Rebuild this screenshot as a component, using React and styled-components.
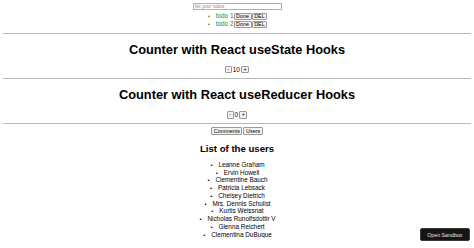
import React, { useState, useReducer } from "react";
import styled, { createGlobalStyle } from "styled-components";

const GlobalStyle = createGlobalStyle`
  html, body { background: #ffffff; }
  body {
    margin: 3.2px;
    font-family: "Liberation Sans", Arial, Helvetica, sans-serif;
    font-size: 6.4px;
    color: #000000;
  }
`;

const Page = styled.div`
  text-align: center;
`;

const TodoInput = styled.input`
  display: block;
  box-sizing: border-box;
  margin: 0 auto;
  width: 89px;
  height: 7px;
  padding: 0 1.2px;
  border: 1px solid #b0b0b0;
  border-radius: 0.5px;
  font-family: "Liberation Sans", Arial, sans-serif;
  font-size: 4.8px;
  background: #ffffff;
  outline: none;
  &::placeholder { color: #8a8a8a; }
`;

const List = styled.ul`
  margin: ${(p) => p.$mt}px 0 ${(p) => p.$mb}px;
  padding: 0 0 0 9px;
  list-style: none;
  color: ${(p) => p.$color || "inherit"};
`;

const Item = styled.li`
  height: ${(p) => p.$h}px;
  line-height: ${(p) => p.$h}px;
  white-space: nowrap;
  &::before {
    content: "•";
    display: inline-block;
    width: 8px;
    text-align: left;
    margin-left: -8px;
    font-size: 6px;
  }
`;

const SmallButton = styled.button`
  box-sizing: border-box;
  height: 7.2px;
  margin: 0;
  padding: 0 1.6px;
  border: 1px solid #9a9a9a;
  border-radius: 1px;
  background: #f2f2f2;
  color: #000000;
  font-family: "Liberation Sans", Arial, sans-serif;
  font-size: 5.4px;
  line-height: 5px;
  vertical-align: middle;
  cursor: pointer;
`;

const Divider = styled.hr`
  height: 0;
  margin: 3.2px 0;
  border: 0;
  border-top: 1px solid #b8b8b8;
`;

const Title = styled.h1`
  margin: 9.1px 0 7.1px;
  font-size: 12.8px;
  line-height: 14.7px;
  font-weight: 700;
`;

const Counter = styled.div`
  display: flex;
  justify-content: center;
  align-items: center;
  gap: 1px;
  height: 10px;
  font-size: 6.4px;
`;

const TabBar = styled.div`
  display: flex;
  justify-content: center;
  align-items: center;
  gap: 1px;
  height: 7.5px;
`;

const Subtitle = styled.h2`
  margin: 8.6px 0 6.4px;
  font-size: 9.6px;
  line-height: 11px;
  font-weight: 700;
`;

const SandboxButton = styled.button`
  position: fixed;
  right: 4.5px;
  bottom: 7px;
  height: 13px;
  padding: 0 6px;
  border: 1px solid #3b3b3b;
  border-radius: 2px;
  background: #151515;
  color: #e6e6e6;
  font-family: "Liberation Sans", Arial, sans-serif;
  font-size: 5.3px;
  cursor: pointer;
`;

const users = [
  "Leanne Graham",
  "Ervin Howell",
  "Clementine Bauch",
  "Patricia Lebsack",
  "Chelsey Dietrich",
  "Mrs. Dennis Schulist",
  "Kurtis Weissnat",
  "Nicholas Runolfsdottir V",
  "Glenna Reichert",
  "Clementina DuBuque",
];

function reducer(state, action) {
  switch (action.type) {
    case "inc":
      return state + 1;
    case "dec":
      return state - 1;
    default:
      return state;
  }
}

export default function App() {
  const [todos, setTodos] = useState([
    { id: 1, text: "todo 1", done: false },
    { id: 2, text: "todo 2", done: false },
  ]);
  const [count, setCount] = useState(10);
  const [value, dispatch] = useReducer(reducer, 0);
  const [tab, setTab] = useState("users");

  return (
    <Page>
      <GlobalStyle />
      <TodoInput placeholder="list your todos" />
      <List $mt={2.2} $mb={4.6} $color="#1a8f1a">
        {todos.map((t) => (
          <Item key={t.id} $h={8}>
            {t.text}
            <SmallButton
              onClick={() =>
                setTodos(todos.map((x) => (x.id === t.id ? { ...x, done: !x.done } : x)))
              }
            >
              Done
            </SmallButton>
            <SmallButton onClick={() => setTodos(todos.filter((x) => x.id !== t.id))}>
              DEL
            </SmallButton>
          </Item>
        ))}
      </List>
      <Divider />
      <Title>Counter with React useState Hooks</Title>
      <Counter>
        <SmallButton onClick={() => setCount(count - 1)}>-</SmallButton>
        <span>{count}</span>
        <SmallButton onClick={() => setCount(count + 1)}>+</SmallButton>
      </Counter>
      <Divider />
      <Title>Counter with React useReducer Hooks</Title>
      <Counter>
        <SmallButton onClick={() => dispatch({ type: "dec" })}>-</SmallButton>
        <span>{value}</span>
        <SmallButton onClick={() => dispatch({ type: "inc" })}>+</SmallButton>
      </Counter>
      <Divider />
      <TabBar>
        <SmallButton onClick={() => setTab("comments")}>Comments</SmallButton>
        <SmallButton onClick={() => setTab("users")}>Users</SmallButton>
      </TabBar>
      <Subtitle>List of the users</Subtitle>
      <List $mt={0} $mb={0}>
        {users.map((u) => (
          <Item key={u} $h={7.75}>
            {u}
          </Item>
        ))}
      </List>
      <SandboxButton>Open Sandbox</SandboxButton>
    </Page>
  );
}
